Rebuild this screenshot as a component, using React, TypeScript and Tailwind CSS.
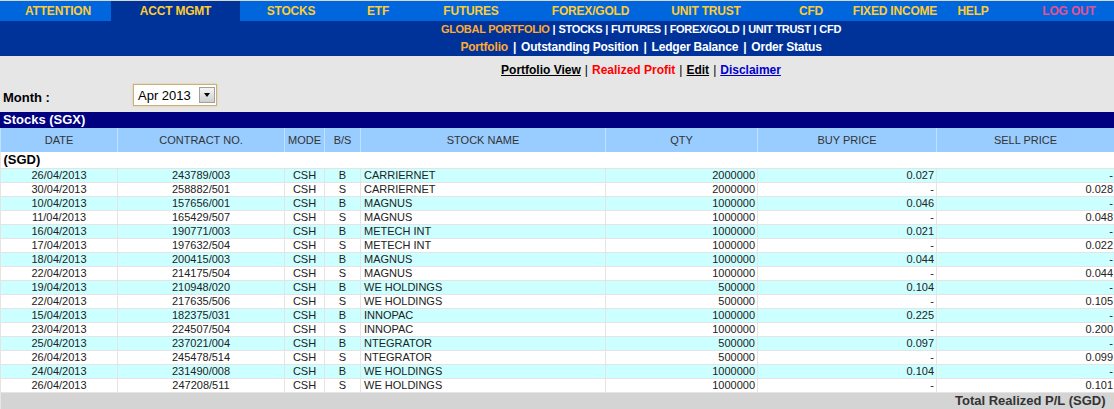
import React from "react";

// ── data ─────────────────────────────────────────────────────

const NAV = [
  { label: "ATTENTION", cls: "w-[111px] pl-[5px] text-[#ffcc33]" },
  { label: "ACCT MGMT", cls: "w-[129px] bg-[#003399] text-[#ffcc33]" },
  { label: "STOCKS", cls: "w-[102px] text-[#ffcc33]" },
  { label: "ETF", cls: "w-[72px] text-[#ffcc33]" },
  { label: "FUTURES", cls: "w-[114px] text-[#ffcc33]" },
  { label: "FOREX/GOLD", cls: "w-[125px] text-[#ffcc33]" },
  { label: "UNIT TRUST", cls: "w-[106px] text-[#ffcc33]" },
  { label: "CFD", cls: "w-[104px] text-[#ffcc33]" },
  { label: "FIXED INCOME", cls: "w-[64px] text-[#ffcc33]" },
  { label: "HELP", cls: "w-[92px] text-[#ffcc33]" },
  { label: "LOG OUT", cls: "w-[100px] text-[#e8508f]" },
];

type Trade = [string, string, string, string, string, string, string, string];

const TRADES: Trade[] = [
  ["26/04/2013", "243789/003", "CSH", "B", "CARRIERNET", "2000000", "0.027", "-"],
  ["30/04/2013", "258882/501", "CSH", "S", "CARRIERNET", "2000000", "-", "0.028"],
  ["10/04/2013", "157656/001", "CSH", "B", "MAGNUS", "1000000", "0.046", "-"],
  ["11/04/2013", "165429/507", "CSH", "S", "MAGNUS", "1000000", "-", "0.048"],
  ["16/04/2013", "190771/003", "CSH", "B", "METECH INT", "1000000", "0.021", "-"],
  ["17/04/2013", "197632/504", "CSH", "S", "METECH INT", "1000000", "-", "0.022"],
  ["18/04/2013", "200415/003", "CSH", "B", "MAGNUS", "1000000", "0.044", "-"],
  ["22/04/2013", "214175/504", "CSH", "S", "MAGNUS", "1000000", "-", "0.044"],
  ["19/04/2013", "210948/020", "CSH", "B", "WE HOLDINGS", "500000", "0.104", "-"],
  ["22/04/2013", "217635/506", "CSH", "S", "WE HOLDINGS", "500000", "-", "0.105"],
  ["15/04/2013", "182375/031", "CSH", "B", "INNOPAC", "1000000", "0.225", "-"],
  ["23/04/2013", "224507/504", "CSH", "S", "INNOPAC", "1000000", "-", "0.200"],
  ["25/04/2013", "237021/004", "CSH", "B", "NTEGRATOR", "500000", "0.097", "-"],
  ["26/04/2013", "245478/514", "CSH", "S", "NTEGRATOR", "500000", "-", "0.099"],
  ["24/04/2013", "231490/008", "CSH", "B", "WE HOLDINGS", "1000000", "0.104", "-"],
  ["26/04/2013", "247208/511", "CSH", "S", "WE HOLDINGS", "1000000", "-", "0.101"],
];

const HEADERS = [
  "DATE",
  "CONTRACT NO.",
  "MODE",
  "B/S",
  "STOCK NAME",
  "QTY",
  "BUY PRICE",
  "SELL PRICE",
];

const COL_W = [
  "w-[117px]",
  "w-[167px]",
  "w-[40px]",
  "w-[36px]",
  "w-[245px]",
  "w-[152px]",
  "w-[179px]",
  "w-[178px]",
];

// text alignment per data column
const ALIGN = [
  "text-center",
  "text-center",
  "text-center",
  "text-center",
  "text-left pl-[3px]",
  "text-right pr-[2px]",
  "text-right pr-[2px]",
  "text-right pr-[1px]",
];

// ── pieces ───────────────────────────────────────────────────

function Sep() {
  return <span className="mx-[5px]">|</span>;
}

function Bar() {
  return <span className="mx-[3px]">|</span>;
}

function MonthSelect() {
  return (
    <div className="flex items-center h-[22px] w-[84px] border border-[#c9b077] bg-white shadow-[0_0_2px_#e0c890] pl-[4px] pr-[1px]">
      <span className="flex-1 text-[13px] text-black leading-none">Apr 2013</span>
      <div className="flex items-center justify-center w-[16px] h-[16px] border border-[#a0a0a0] bg-gradient-to-b from-[#f4f4f4] to-[#cfcfcf]">
        <div className="w-0 h-0 border-l-[3.5px] border-r-[3.5px] border-t-[4px] border-l-transparent border-r-transparent border-t-black" />
      </div>
    </div>
  );
}

// ── App ──────────────────────────────────────────────────────

export default function App() {
  return (
    <div
      className="w-[1114px] h-[409px] overflow-hidden bg-[#e6e6e6]"
      style={{ fontFamily: '"Liberation Sans", Arial, sans-serif' }}
    >
      {/* ── Main nav ─────────────────────────────── */}
      <div className="flex h-[21px] w-[1282px] bg-[#0066dd] border-t border-[#d8d8d8]">
        {NAV.map((n) => (
          <div
            key={n.label}
            className={`flex shrink-0 items-center justify-center whitespace-nowrap text-[12px] font-bold tracking-[-0.2px] ${n.cls}`}
          >
            {n.label}
          </div>
        ))}
      </div>

      {/* ── Sub nav ──────────────────────────────── */}
      <div className="w-[1282px] bg-[#003399] text-white font-bold">
        <div className="flex h-[17px] items-center justify-center text-[11px] tracking-[-0.3px] whitespace-nowrap">
          <span className="text-[#ffaa33]">GLOBAL PORTFOLIO</span>
          <Bar />STOCKS<Bar />FUTURES<Bar />FOREX/GOLD<Bar />UNIT TRUST<Bar />CFD
        </div>
        <div className="flex h-[18px] items-center justify-center text-[12px] tracking-[-0.2px] whitespace-nowrap">
          <span className="text-[#ffaa33]">Portfolio</span>
          <Sep />Outstanding Position<Sep />Ledger Balance<Sep />Order Status
        </div>
      </div>

      {/* ── Links ────────────────────────────────── */}
      <div className="w-[1282px] flex h-[28px] items-center justify-center text-[12px] font-bold whitespace-nowrap text-black">
        <span className="underline">Portfolio View</span>
        <span className="mx-[4px] font-normal">|</span>
        <span className="text-[#ff0000]">Realized Profit</span>
        <span className="mx-[4px] font-normal">|</span>
        <span className="underline">Edit</span>
        <span className="mx-[4px] font-normal">|</span>
        <span className="underline text-[#0000cc]">Disclaimer</span>
      </div>

      {/* ── Month ────────────────────────────────── */}
      <div className="flex h-[28px] items-start">
        <div className="w-[133px] pl-[3px] pt-[4px] text-[13px] font-bold text-black">Month :</div>
        <MonthSelect />
      </div>

      {/* ── Table ────────────────────────────────── */}
      <div className="h-[16px] bg-[#000080] flex items-center pl-[3px] text-[13px] font-bold text-white">
        Stocks (SGX)
      </div>

      <table className="table-fixed border-collapse w-[1114px] text-[11px]">
        <colgroup>
          {COL_W.map((w, i) => (
            <col key={i} className={w} />
          ))}
        </colgroup>
        <thead>
          <tr className="h-[24px] bg-[#99ccff]">
            {HEADERS.map((h) => (
              <th
                key={h}
                className="font-normal text-[#333] text-center border-x border-[#c4e0ff] p-0"
              >
                {h}
              </th>
            ))}
          </tr>
        </thead>
        <tbody>
          <tr className="h-[16px] bg-white">
            <td colSpan={8} className="p-0 pl-[3px] text-[13px] font-bold text-black leading-none">
              (SGD)
            </td>
          </tr>
          {TRADES.map((t, r) => (
            <tr
              key={r}
              className={`h-[14px] ${r % 2 === 0 ? "bg-[#ccffff]" : "bg-white"}`}
            >
              {t.map((c, i) => (
                <td
                  key={i}
                  className={`p-0 leading-[13px] text-[#222] border border-[#e4e4e4] ${ALIGN[i]}`}
                >
                  {c}
                </td>
              ))}
            </tr>
          ))}
          <tr className="h-[17px] bg-[#d4d4d4]">
            <td
              colSpan={8}
              className="p-0 pr-[9px] text-right text-[13px] font-bold text-[#333] leading-none"
            >
              Total Realized P/L (SGD)
            </td>
          </tr>
        </tbody>
      </table>
    </div>
  );
}
